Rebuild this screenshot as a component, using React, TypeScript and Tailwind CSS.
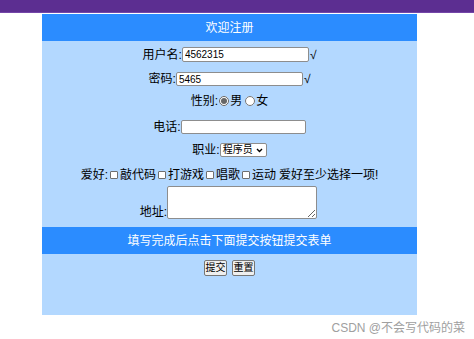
import React from "react";

const font = "font-['Liberation_Sans','Noto_Sans_CJK_SC',sans-serif]";

const TextBox = ({ value, w }: { value?: string; w: string }) => (
  <input
    type="text"
    defaultValue={value}
    className={`${w} h-full bg-white border border-[#8d8d8d] rounded-[2px] px-[2px] text-[10px] leading-none text-black outline-none`}
  />
);

const Check = ({ label }: { label: string }) => (
  <span className="flex items-center">
    <input
      type="checkbox"
      className="appearance-none w-[8px] h-[8px] mx-[2px] bg-white border border-[#707070] rounded-[1px]"
    />
    <span>{label}</span>
  </span>
);

const App = () => {
  return (
    <div className={`w-[474px] h-[339px] bg-white overflow-hidden ${font}`}>
      <div className="h-[13px] bg-[#5c2e91] border-b border-[#7446a8]" />
      <div className="ml-[42px] w-[375px] mt-[1px] bg-[#b3d8ff] pb-[39px] text-[12px] leading-none text-black">
        <div className="h-[27px] bg-[#2b8cff] flex items-center justify-center text-white">
          欢迎注册
        </div>

        <div className="mt-[6px] h-[15px] flex items-center justify-center">
          <span>用户名:</span>
          <TextBox value="4562315" w="w-[127px]" />
          <span className="ml-[1px]">√</span>
        </div>

        <div className="mt-[10px] h-[14px] flex items-center justify-center">
          <span>密码:</span>
          <TextBox value="5465" w="w-[127px]" />
          <span className="ml-[1px]">√</span>
        </div>

        <div className="mt-[7px] h-[16px] flex items-center justify-center">
          <span>性别:</span>
          <input
            type="radio"
            name="sex"
            defaultChecked
            className="w-[10px] h-[10px] mx-[1px] accent-[#666]"
          />
          <span>男</span>
          <input
            type="radio"
            name="sex"
            className="w-[10px] h-[10px] ml-[3px] mr-[1px] accent-[#666]"
          />
          <span>女</span>
        </div>

        <div className="mt-[11px] h-[14px] flex items-center justify-center">
          <span>电话:</span>
          <TextBox w="w-[125px]" />
        </div>

        <div className="mt-[9px] h-[14px] flex items-center justify-center">
          <span>职业:</span>
          <div className="h-full w-[47px] bg-white border border-[#8d8d8d] rounded-[2px] flex items-center justify-between pl-[2px] pr-[3px] text-[10px]">
            <span>程序员</span>
            <svg width="7" height="5" viewBox="0 0 7 5">
              <path
                d="M1 1l2.5 2.5L6 1"
                stroke="#000"
                strokeWidth="1.4"
                fill="none"
              />
            </svg>
          </div>
        </div>

        <div className="mt-[10px] h-[16px] flex items-center justify-center">
          <span>爱好:</span>
          <Check label="敲代码" />
          <Check label="打游戏" />
          <Check label="唱歌" />
          <Check label="运动" />
          <span className="ml-[3px]">爱好至少选择一项!</span>
        </div>

        <div className="mt-[3px] h-[33px] flex items-end justify-center pr-[2px]">
          <span className="mb-[1px]">地址:</span>
          <textarea className="w-[150px] h-[33px] bg-white border border-[#8d8d8d] rounded-[2px] text-[10px] outline-none" />
        </div>

        <div className="mt-[8px] h-[27px] bg-[#2b8cff] flex items-center justify-center text-white">
          填写完成后点击下面提交按钮提交表单
        </div>

        <div className="mt-[6px] h-[16px] flex items-center justify-center gap-[5px]">
          <button className="h-full w-[23px] bg-[#efefef] border border-[#767676] rounded-[2px] text-[10px] text-black leading-none">
            提交
          </button>
          <button className="h-full w-[23px] bg-[#efefef] border border-[#767676] rounded-[2px] text-[10px] text-black leading-none">
            重置
          </button>
        </div>
      </div>
      <div className="mt-[7px] pr-[9px] text-right text-[12px] leading-none text-[#a0a0a0]">
        CSDN @不会写代码的菜
      </div>
    </div>
  );
};

export default App;
